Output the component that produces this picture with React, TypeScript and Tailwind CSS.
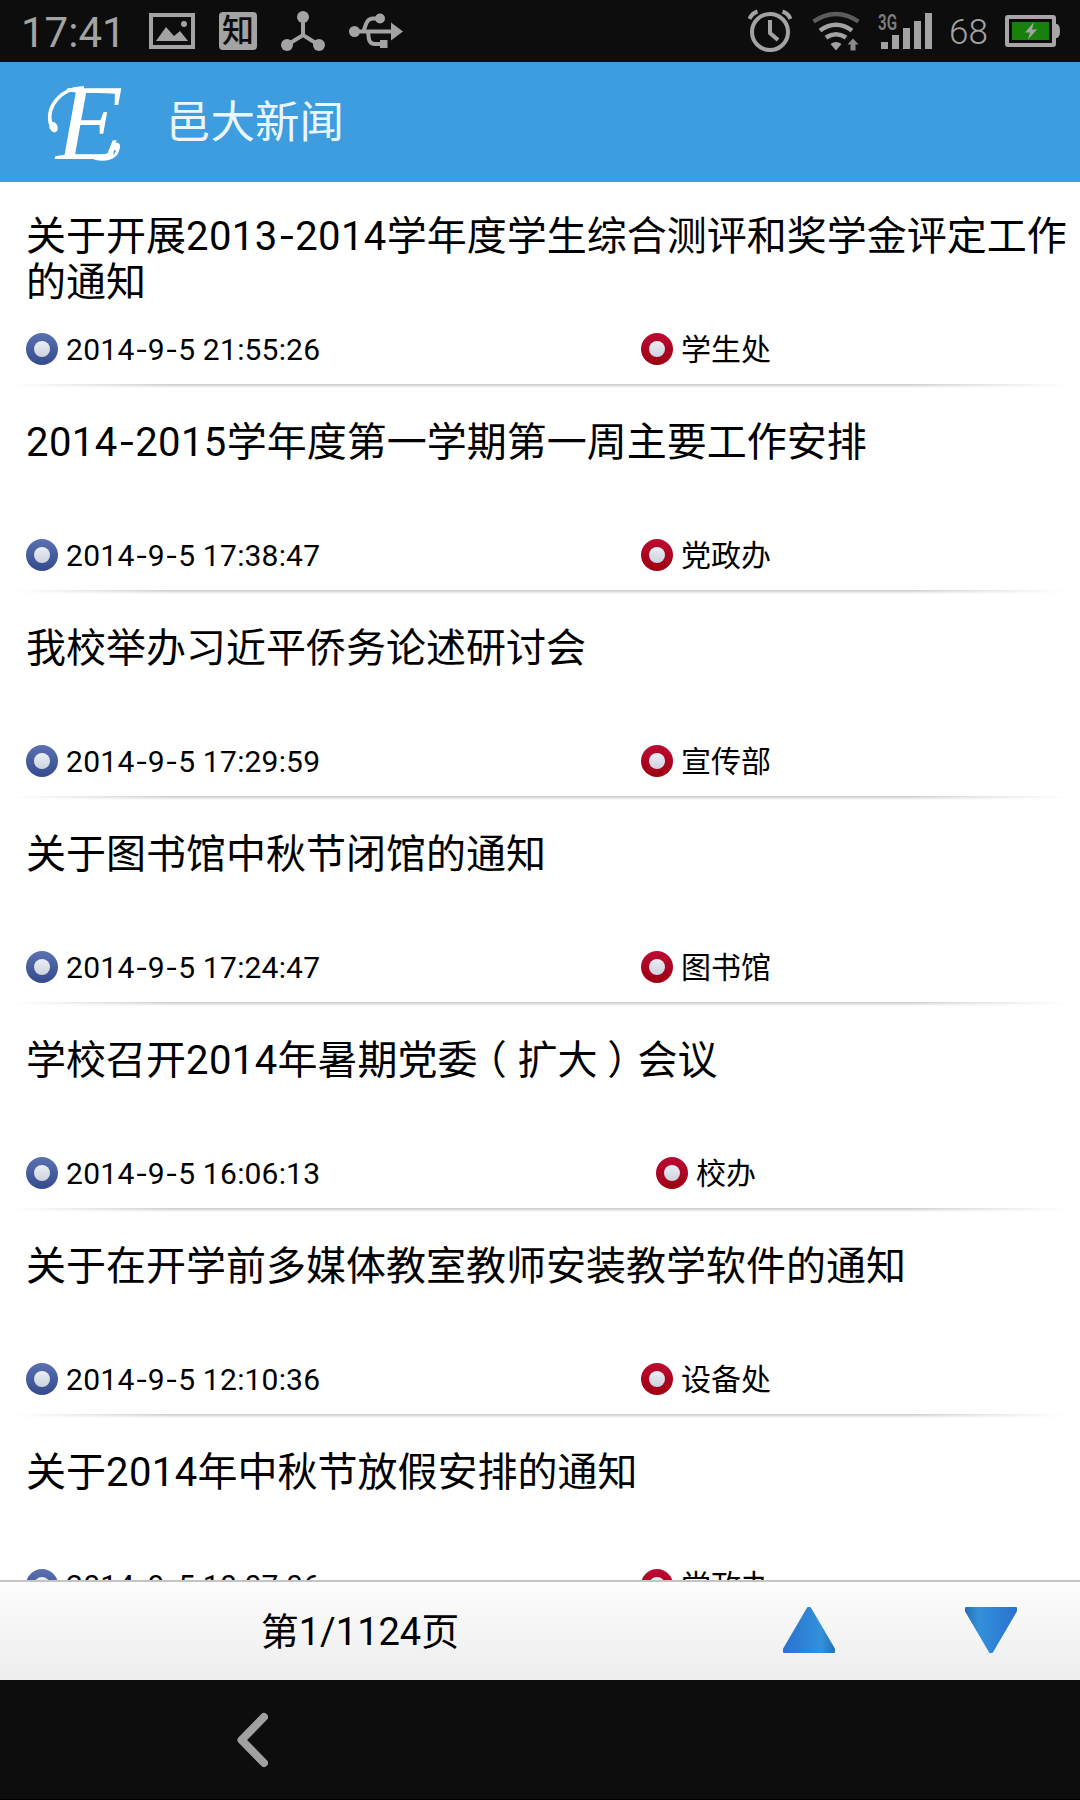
import { Fragment } from 'react'

interface NewsItem {
    title: string
    date: string
    source: string
}

const NEWS: NewsItem[] = [
    { title: '关于开展2013-2014学年度学生综合测评和奖学金评定工作的通知', date: '2014-9-5 21:55:26', source: '学生处' },
    { title: '2014-2015学年度第一学期第一周主要工作安排', date: '2014-9-5 17:38:47', source: '党政办' },
    { title: '我校举办习近平侨务论述研讨会', date: '2014-9-5 17:29:59', source: '宣传部' },
    { title: '关于图书馆中秋节闭馆的通知', date: '2014-9-5 17:24:47', source: '图书馆' },
    { title: '学校召开2014年暑期党委（扩大）会议', date: '2014-9-5 16:06:13', source: '校办' },
    { title: '关于在开学前多媒体教室教师安装教学软件的通知', date: '2014-9-5 12:10:36', source: '设备处' },
    { title: '关于2014年中秋节放假安排的通知', date: '2014-9-5 10:07:06', source: '党政办' },
]

/* Digits run slightly wide, hyphens get a wider cell, full-width brackets sit centred in theirs */
function MixedText({ text }: { text: string }) {
    return (
        <>
            {text.split(/([\d-]+|[（）])/).map((part, i) => {
                if (part === '（') {
                    return <span key={i} className="inline-block -translate-x-[0.27em]">{part}</span>
                }
                if (part === '）') {
                    return <span key={i} className="inline-block translate-x-[0.24em]">{part}</span>
                }
                if (/^[\d-]+$/.test(part)) {
                    return (
                        <span key={i} className="tracking-[0.01em]">
                            {part.split('-').map((piece, j) => (
                                <Fragment key={j}>
                                    {j > 0 && <span className="inline-block w-[0.44em] scale-x-125 text-center tracking-normal">-</span>}
                                    {piece}
                                </Fragment>
                            ))}
                        </span>
                    )
                }
                return <Fragment key={i}>{part}</Fragment>
            })}
        </>
    )
}

function Bullet({ color }: { color: 'blue' | 'red' }) {
    const ring = color === 'blue' ? 'from-[#5a72b0] to-[#344a8e]' : 'from-[#bd0a33] to-[#9c0010]'
    return (
        <span className={`flex size-8 shrink-0 items-center justify-center rounded-full bg-linear-to-b ${ring}`}>
            <span className="size-4 rounded-full bg-linear-to-b from-[#eceef4] to-[#ccd2de]" />
        </span>
    )
}

function StatusBar() {
    return (
        <div className="flex h-[62px] shrink-0 items-center bg-[#0d0d0d] text-[#a3a3a3]">
            <span className="w-[128px] pt-[3px] pl-[21px] text-[42px] leading-none">17:41</span>

            {/* Gallery */}
            <svg className="ml-[21px] h-[62px] w-[46px]" viewBox="149 0 46 62" fill="#a3a3a3">
                <rect x="151" y="15" width="42" height="32" fill="none" stroke="#a3a3a3" strokeWidth="4" />
                <path d="M156 41 L166 27 L174 36 L180 31 L188 41 Z" />
                <circle cx="184" cy="24" r="3" />
            </svg>

            {/* Zhihu */}
            <span className="ml-6 flex size-[38px] items-center justify-center rounded-sm bg-[#a3a3a3] text-[32px] leading-none font-medium text-[#0d0d0d]">
                知
            </span>

            {/* Share nodes */}
            <svg className="ml-6 h-[62px] w-11" viewBox="281 0 44 62" fill="#a3a3a3">
                <path d="M303 17 V35 M287 45 L303 35 L319 45" fill="none" stroke="#a3a3a3" strokeWidth="4" />
                <circle cx="303" cy="17" r="6" />
                <circle cx="287" cy="45" r="6" />
                <circle cx="319" cy="45" r="6" />
            </svg>

            {/* USB */}
            <svg className="ml-6 h-[62px] w-[54px]" viewBox="349 0 54 62" fill="#a3a3a3">
                <path d="M354 31.500 H393 M362 31.500 C366 31.500 364 18.500 373 18.500 H379 M368 31.500 C369 35 367 44 375 44 H382" fill="none" stroke="#a3a3a3" strokeWidth="4" />
                <circle cx="354.500" cy="31.500" r="5.500" />
                <circle cx="380" cy="18.500" r="5" />
                <rect x="380" y="40" width="7.500" height="8" />
                <path d="M391 22.500 L403 31.500 L391 40.500 Z" />
            </svg>

            {/* Alarm */}
            <svg className="ml-auto h-[62px] w-11" viewBox="748 0 44 62" fill="none" stroke="#a3a3a3">
                <circle cx="770" cy="32" r="18" strokeWidth="4" />
                <path d="M770 20 V33 L778 40" strokeWidth="4" />
                <path d="M749.500 19 C751 15.500 754 12.500 757.500 11.500 M790.500 19 C789 15.500 786 12.500 782.500 11.500" strokeWidth="4" />
            </svg>

            {/* Wifi */}
            <svg className="ml-5 h-[62px] w-12" viewBox="812 0 48 62" fill="none" stroke="#a3a3a3" strokeWidth="4.500">
                <path d="M813.500 21.500 Q836 6.500 858.500 21.500" stroke="#5c5c5c" />
                <path d="M820 30.500 Q836 19 852 30.500" />
                <path d="M826 37.500 Q836 31 846 37.500" />
                <path d="M830.500 44 Q836 40 841.500 44 L836 50.500 Z" fill="#a3a3a3" stroke="none" />
                <path d="M853 38.500 L858.500 44.500 H855.500 V50.500 H850.500 V44.500 H847.500 Z" fill="#8a8a8a" stroke="none" />
            </svg>

            {/* Signal strength */}
            <svg className="ml-[18px] h-[62px] w-[54px]" viewBox="877 0 54 62" fill="#a3a3a3">
                <text x="877" y="30" fontSize="22" fontWeight="600" fill="#7d7d7d" textLength="19" lengthAdjust="spacingAndGlyphs">3G</text>
                <rect x="880" y="42" width="7" height="7" />
                <rect x="891" y="35" width="7" height="14" />
                <rect x="902" y="28" width="7" height="21" />
                <rect x="913" y="21" width="7" height="28" />
                <rect x="924" y="13" width="7" height="36" />
            </svg>

            <span className="ml-[17px] w-[38px] pt-[3px] text-[35px] leading-none font-light">68</span>

            {/* Battery */}
            <svg className="mr-5 ml-[18px] h-[62px] w-[55px]" viewBox="1005 0 55 62">
                <rect x="1007" y="17" width="47" height="28" rx="1" fill="none" stroke="#a8a4a8" strokeWidth="4" />
                <path d="M1056 24 H1057 Q1060 25 1060 31 Q1060 37 1057 38 H1056 Z" fill="#a8a4a8" />
                <rect x="1012" y="22" width="37" height="18" fill="#18800c" />
                <path d="M1034 22 L1025 32.500 H1030 L1028 39.500 L1037 29.500 H1032 Z" fill="#a3a3a3" />
            </svg>
        </div>
    )
}

function Header() {
    return (
        <header className="flex h-[120px] shrink-0 items-center bg-[#3d9ddf] pl-[44px]">
            <svg className="h-[120px] w-[84px]" viewBox="44 62 84 120">
                <text
                    x="56"
                    y="159"
                    fontSize="108"
                    fontStyle="italic"
                    fill="#fff"
                    className="font-['Liberation_Serif',serif]"
                    textLength="67"
                    lengthAdjust="spacingAndGlyphs"
                >
                    E
                </text>
                {/* Entry flourish and tail */}
                <path d="M84 88 C62 87 46 106 50.500 124" fill="none" stroke="#fff" strokeWidth="3.500" />
                <ellipse cx="53.500" cy="127" rx="4" ry="5.500" transform="rotate(-25 53.500 127)" fill="#fff" />
                <path d="M94 158 C108 161.500 119 157 118 146" fill="none" stroke="#fff" strokeWidth="3" />
                <circle cx="116" cy="146.500" r="4" fill="#fff" />
            </svg>
            <h1 className="ml-[38px] pt-0.5 text-[44.500px] leading-none text-[#eaf7ff]">邑大新闻</h1>
        </header>
    )
}

function NewsRow({ item }: { item: NewsItem }) {
    return (
        <li className="flex h-[206px] shrink-0 flex-col">
            <h2 className="h-[150px] pt-8 pr-2 pl-[26px] text-[40px] leading-[46px] break-all">
                <MixedText text={item.title} />
            </h2>
            <div className="flex h-[34px] items-center pl-[26px] text-[30px] leading-none">
                <div className="flex w-[334px] items-center gap-2">
                    <Bullet color="blue" />
                    <span className="pt-0.5 whitespace-nowrap">
                        <MixedText text={item.date} />
                    </span>
                </div>
                <div className="flex w-[692px] items-center justify-center gap-2">
                    <Bullet color="red" />
                    <span className="pt-0.5">{item.source}</span>
                </div>
            </div>
            <div className="mt-[18px] h-1 bg-linear-to-b from-[#c9c9c9] to-white mask-x-from-84% mask-x-to-99%" />
        </li>
    )
}

function Pager() {
    return (
        <footer className="flex h-[100px] shrink-0 items-center border-t-2 border-[#c4c4c4] bg-linear-to-b from-[#fdfdfd] to-[#ededed]">
            <span className="w-[720px] pt-0.5 text-center text-[38px] leading-none">第1/1124页</span>
            <svg className="mb-0.5 ml-[62px] h-12 w-[54px]" viewBox="0 0 54 48">
                <defs>
                    <linearGradient id="up">
                        <stop offset="0" stopColor="#2a73cf" />
                        <stop offset="0.75" stopColor="#3391da" />
                        <stop offset="1" stopColor="#2672b8" />
                    </linearGradient>
                </defs>
                <path d="M26 2 H28 L52 43 V46 H2 V43 Z" fill="url(#up)" stroke="url(#up)" strokeWidth="2" strokeLinejoin="round" />
            </svg>
            <svg className="mb-0.5 ml-[128px] h-12 w-[54px]" viewBox="0 0 54 48">
                <defs>
                    <linearGradient id="down">
                        <stop offset="0" stopColor="#2672b8" />
                        <stop offset="0.25" stopColor="#3391da" />
                        <stop offset="1" stopColor="#2a73cf" />
                    </linearGradient>
                </defs>
                <path d="M2 2 H52 V5 L28 46 H26 L2 5 Z" fill="url(#down)" stroke="url(#down)" strokeWidth="2" strokeLinejoin="round" />
            </svg>
        </footer>
    )
}

export default function App() {
    return (
        <div className="flex h-[1800px] w-[1080px] flex-col overflow-hidden bg-white font-[Roboto,'Noto_Sans_CJK_SC',sans-serif] text-black">
            <StatusBar />
            <Header />
            <ul className="flex h-[1398px] shrink-0 flex-col overflow-hidden">
                {NEWS.map((item) => (
                    <NewsRow key={item.date} item={item} />
                ))}
            </ul>
            <Pager />
            <nav className="flex flex-1 items-center border-b border-black bg-[#0d0d0d] pl-[236px]">
                <svg className="h-14 w-8" viewBox="0 0 32 56" fill="none" stroke="#a0a0a0" strokeWidth="8" strokeLinecap="round" strokeLinejoin="round">
                    <path d="M28 5 L5.500 28 L28 51" />
                </svg>
            </nav>
        </div>
    )
}
